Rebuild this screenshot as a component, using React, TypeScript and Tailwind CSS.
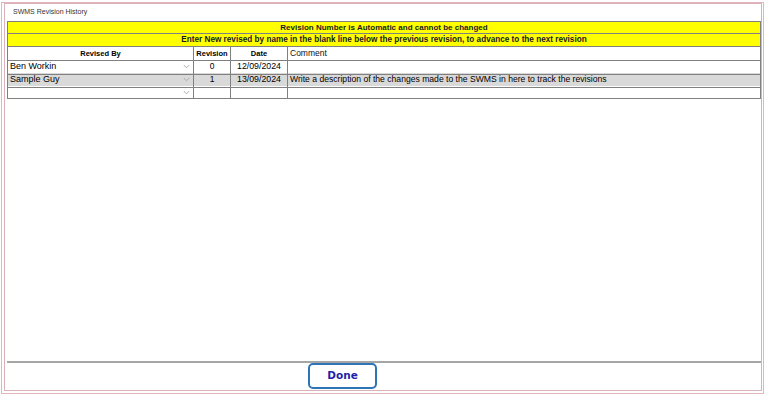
import React from "react";

type Row = {
  name: string;
  revision: string;
  date: string;
  comment: string;
  shaded?: boolean;
};

const rows: Row[] = [
  { name: "Ben Workin", revision: "0", date: "12/09/2024", comment: "" },
  {
    name: "Sample Guy",
    revision: "1",
    date: "13/09/2024",
    comment:
      "Write a description of the changes made to the SWMS in here to track the revisions",
    shaded: true,
  },
  { name: "", revision: "", date: "", comment: "" },
];

function Chevron() {
  return (
    <svg width="7" height="5" viewBox="0 0 7 5" className="shrink-0">
      <polyline points="0.8,1 3.5,3.8 6.2,1" fill="none" stroke="#a6a6a6" strokeWidth="0.9" />
    </svg>
  );
}

export default function App() {
  const sans = { fontFamily: '"Liberation Sans", Arial, sans-serif' };

  return (
    <div className="w-[768px] h-[396px] bg-white pt-[2px] pl-[1px]" style={sans}>
      {/* outer window frame */}
      <div className="w-[763px] h-[392px] border border-[#e2b4bb]">
        {/* inner frame */}
        <div className="ml-[2px] w-[758px] h-[388px] border border-[#d8b2b8] flex flex-col">
          <div className="h-[17px] pl-[8px] flex items-center text-[7px] text-[#333333]">
            SWMS Revision History
          </div>

          <div className="ml-[2px] w-[754px] border-t border-l border-[#808080] text-black">
            <div className="h-[12px] bg-[#ffff00] border-r border-b border-[#808080] flex items-center justify-center text-[8px] font-bold text-[#1a1a1a]">
              Revision Number is Automatic and cannot be changed
            </div>
            <div className="h-[13px] bg-[#ffff00] border-r border-b border-[#808080] flex items-center justify-center text-[8.2px] font-bold text-[#1a1a1a]">
              Enter New revised by name in the blank line below the previous revision, to advance to the next revision
            </div>

            <div className="grid grid-cols-[186px_37px_57px_473px] h-[13px] text-[7.5px]">
              <div className="border-r border-b border-[#808080] flex items-center justify-center font-bold">
                Revised By
              </div>
              <div className="border-r border-b border-[#808080] flex items-center justify-center font-bold">
                Revision
              </div>
              <div className="border-r border-b border-[#808080] flex items-center justify-center font-bold">
                Date
              </div>
              <div className="border-r border-b border-[#808080] flex items-center pl-[2px] text-[8.5px] text-[#111111]">
                Comment
              </div>
            </div>

            {rows.map((r, i) => (
              <div
                key={i}
                className={`grid grid-cols-[186px_37px_57px_473px] h-[13px] ${
                  r.shaded ? "bg-[#d9d9d9]" : "bg-white"
                }`}
              >
                <div className="border-r border-b border-[#808080] flex items-center pl-[2px] pr-[3px] text-[9px]">
                  <span className="flex-1 truncate">{r.name}</span>
                  <Chevron />
                </div>
                <div className="border-r border-b border-[#808080] flex items-center justify-center text-[8.5px]">
                  {r.revision}
                </div>
                <div className="border-r border-b border-[#808080] flex items-center justify-center text-[8.8px]">
                  {r.date}
                </div>
                <div className="border-r border-b border-[#808080] flex items-center pl-[2px] text-[8.6px] truncate">
                  {r.comment}
                </div>
              </div>
            ))}
          </div>

          <div className="flex-1" />

          <div className="ml-[2px] w-[754px] h-[2px] bg-[#a6a6a6]" />
          <div className="h-[27px]">
            <button
              className="ml-[303px] w-[69px] h-[26px] border-2 border-[#2e75b6] rounded-[5px] bg-white flex items-center justify-center text-[10.5px] font-bold text-[#1f1fa8]"
              style={{ fontFamily: '"DejaVu Sans", Verdana, sans-serif' }}
            >
              Done
            </button>
          </div>
        </div>
      </div>
    </div>
  );
}
